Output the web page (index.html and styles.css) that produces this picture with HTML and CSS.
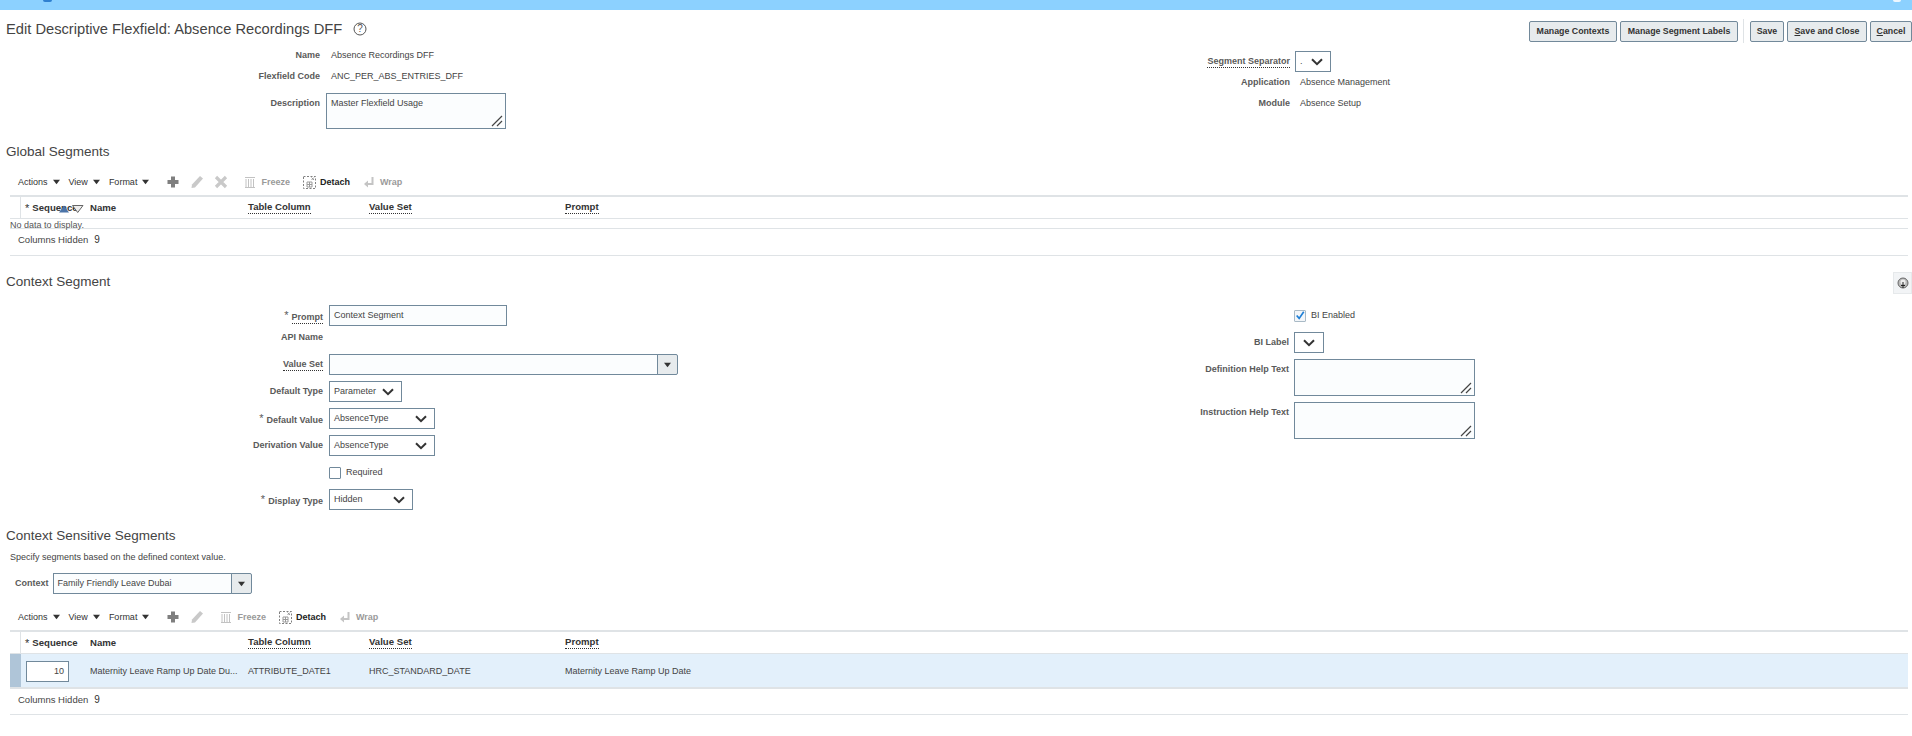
FILE: index.html
```html
<!DOCTYPE html>
<html lang="en">
<head>
<meta charset="utf-8">
<title>Edit Descriptive Flexfield</title>
<link rel="stylesheet" href="styles.css">
</head>
<body>
<svg class="defs" width="0" height="0" aria-hidden="true">
  <defs>
    <symbol id="chev" viewBox="0 0 12 8"><path d="M1 1.200 6 6.200 11 1.200" fill="none" stroke="#333" stroke-width="2"/></symbol>
    <symbol id="tri" viewBox="0 0 8 6"><path d="M0 .5H8L4 5.500Z" fill="#333"/></symbol>
    <symbol id="plus" viewBox="0 0 14 14"><path d="M5 1.500H9V5H12.500V9H9V12.500H5V9H1.500V5H5Z" fill="#7f7f7f"/></symbol>
    <symbol id="pencil" viewBox="0 0 14 14"><path d="M10 1 13 3.500 5 12.500 1.500 13 2 9.500Z" fill="#c9c9c9"/></symbol>
    <symbol id="cross" viewBox="0 0 14 14"><path d="M2 2 12 12M12 2 2 12" stroke="#c9c9c9" stroke-width="3.200"/></symbol>
    <symbol id="freeze" viewBox="0 0 12 12"><path d="M1 1.500H11M1 11.500H11M2 3V11M4.500 3V11M7 3V11M9.500 3V11" stroke="#c2c2c2" fill="none"/></symbol>
    <symbol id="detach" viewBox="0 0 13 13"><path d="M.5 .5H12.500V12.500H.5Z" fill="none" stroke="#808080" stroke-dasharray="2 1.500"/><path d="M4 6H9V11H4ZM6.500 6V11M4 8.500H9" fill="none" stroke="#9a9a9a"/><path d="M8.500 1.500 11 4M11 1.500 8.500 4" stroke="#999"/></symbol>
    <symbol id="wrap" viewBox="0 0 12 12"><path d="M9.500 1V8H3.500" fill="none" stroke="#c4c4c4" stroke-width="2"/><path d="M5 4.500 1 8 5 11.500Z" fill="#c4c4c4"/></symbol>
    <symbol id="grip" viewBox="0 0 12 12"><path d="M11 1 1 11M11 6 6 11" stroke="#444" stroke-width="1.200" fill="none"/></symbol>
  </defs>
</svg>

<div class="topbar"><span class="blob blob-blue"></span><span class="blob blob-white"></span></div>

<header class="head">
  <h1 class="title">Edit Descriptive Flexfield: Absence Recordings DFF
    <svg class="help" viewBox="0 0 14 14" width="14" height="14"><circle cx="7" cy="7" r="6" fill="none" stroke="#555"/><text x="7" y="10.200" text-anchor="middle" class="help-q">?</text></svg>
  </h1>
  <div class="actions">
    <button class="btn btn-mc">Manage Contexts</button>
    <button class="btn btn-msl">Manage Segment Labels</button>
    <span class="btn-sep"></span>
    <button class="btn btn-save">Save</button>
    <button class="btn btn-close"><u>S</u>ave and Close</button>
    <button class="btn btn-cancel"><u>C</u>ancel</button>
  </div>
</header>

<section class="meta">
  <div class="meta-left">
    <div class="row"><span class="lbl">Name</span><span class="val">Absence Recordings DFF</span></div>
    <div class="row"><span class="lbl">Flexfield Code</span><span class="val">ANC_PER_ABS_ENTRIES_DFF</span></div>
    <div class="row row-top row-desc"><span class="lbl">Description</span>
      <div class="area area-desc">Master Flexfield Usage<svg class="grip"><use href="#grip"/></svg></div>
    </div>
  </div>
  <div class="meta-right">
    <div class="row"><span class="lbl lbl-r"><span class="dot">Segment Separator</span></span>
      <div class="select sel-sep"><span>.</span><svg class="chev"><use href="#chev"/></svg></div></div>
    <div class="row"><span class="lbl lbl-r">Application</span><span class="val val-r">Absence Management</span></div>
    <div class="row"><span class="lbl lbl-r">Module</span><span class="val val-r">Absence Setup</span></div>
  </div>
</section>

<h2 class="heading">Global Segments</h2>

<div class="toolbar tb-first">
  <span class="menu">Actions<svg class="tri"><use href="#tri"/></svg></span>
  <span class="menu">View<svg class="tri"><use href="#tri"/></svg></span>
  <span class="menu">Format<svg class="tri"><use href="#tri"/></svg></span>
  <svg class="ico ico-first"><use href="#plus"/></svg>
  <svg class="ico"><use href="#pencil"/></svg>
  <svg class="ico"><use href="#cross"/></svg>
  <span class="tool off tool-first"><svg class="ico12"><use href="#freeze"/></svg>Freeze</span>
  <span class="tool"><svg class="ico13"><use href="#detach"/></svg>Detach</span>
  <span class="tool off"><svg class="ico12"><use href="#wrap"/></svg>Wrap</span>
</div>
<div class="table">
  <div class="t-head">
    <div class="gutter"></div>
    <div class="th th-seq"><span class="req">*</span>Sequence
      <svg class="sort" viewBox="0 0 26 8" width="26" height="8"><path d="M1 7.500 6 .5 11 7.500Z" fill="#4c74a8"/><path d="M14.500 .5H25L19.700 7.500Z" fill="#eee" stroke="#666"/></svg>
    </div>
    <div class="th">Name</div>
    <div class="th"><span class="dot">Table Column</span></div>
    <div class="th"><span class="dot">Value Set</span></div>
    <div class="th"><span class="dot">Prompt</span></div>
  </div>
  <div class="nodata">No data to display.</div>
  <div class="t-foot">Columns Hidden <span class="count">9</span></div>
</div>

<div class="head-row">
  <h2 class="heading">Context Segment</h2>
  <div class="icon-btn"><svg viewBox="0 0 12 12" width="12" height="12"><circle cx="6" cy="6" r="5" fill="#bbb" stroke="#666"/><circle cx="6" cy="5" r="2.500" fill="#eee"/><path d="M6 5V11M4 8.500H8" stroke="#222"/></svg></div>
</div>

<section class="ctx">
  <div class="ctx-left">
    <div class="row row-tight"><span class="lbl lbl-c"><span class="req">*</span><span class="dot">Prompt</span></span><div class="input w-prompt">Context Segment</div></div>
    <div class="row"><span class="lbl lbl-c">API Name</span></div>
    <div class="row"><span class="lbl lbl-c"><span class="dot">Value Set</span></span>
      <div class="combo w-vs"><div class="input"></div><span class="drop"><svg class="tri"><use href="#tri"/></svg></span></div></div>
    <div class="row"><span class="lbl lbl-c">Default Type</span><div class="select w-type"><span>Parameter</span><svg class="chev"><use href="#chev"/></svg></div></div>
    <div class="row"><span class="lbl lbl-c"><span class="req">*</span>Default Value</span><div class="select w-val"><span>AbsenceType</span><svg class="chev"><use href="#chev"/></svg></div></div>
    <div class="row"><span class="lbl lbl-c">Derivation Value</span><div class="select w-val"><span>AbsenceType</span><svg class="chev"><use href="#chev"/></svg></div></div>
    <div class="row"><span class="lbl lbl-c"></span><span class="check"></span><span class="check-text">Required</span></div>
    <div class="row"><span class="lbl lbl-c"><span class="req">*</span>Display Type</span><div class="select w-disp"><span>Hidden</span><svg class="chev"><use href="#chev"/></svg></div></div>
  </div>
  <div class="ctx-right">
    <div class="row row-bi"><span class="lbl lbl-b"></span><span class="check check-on"><svg viewBox="0 0 12 12" width="11" height="11"><path d="M2 6 5 9.500 10.500 1.500" fill="none" stroke="#1e7fd6" stroke-width="2"/></svg></span><span class="check-text">BI Enabled</span></div>
    <div class="row"><span class="lbl lbl-b">BI Label</span><div class="select sel-bi"><svg class="chev"><use href="#chev"/></svg></div></div>
    <div class="row row-top"><span class="lbl lbl-b">Definition Help Text</span><div class="area area-help"><svg class="grip"><use href="#grip"/></svg></div></div>
    <div class="row row-top"><span class="lbl lbl-b">Instruction Help Text</span><div class="area area-help"><svg class="grip"><use href="#grip"/></svg></div></div>
  </div>
</section>

<h2 class="heading h-css">Context Sensitive Segments</h2>
<p class="hint">Specify segments based on the defined context value.</p>
<div class="context-row">
  <span class="context-lbl">Context</span>
  <div class="combo w-ctx"><div class="input">Family Friendly Leave Dubai</div><span class="drop"><svg class="tri"><use href="#tri"/></svg></span></div>
</div>

<div class="toolbar tb-second">
  <span class="menu">Actions<svg class="tri"><use href="#tri"/></svg></span>
  <span class="menu">View<svg class="tri"><use href="#tri"/></svg></span>
  <span class="menu">Format<svg class="tri"><use href="#tri"/></svg></span>
  <svg class="ico ico-first"><use href="#plus"/></svg>
  <svg class="ico"><use href="#pencil"/></svg>
  <span class="tool off tool-first"><svg class="ico12"><use href="#freeze"/></svg>Freeze</span>
  <span class="tool"><svg class="ico13"><use href="#detach"/></svg>Detach</span>
  <span class="tool off"><svg class="ico12"><use href="#wrap"/></svg>Wrap</span>
</div>
<div class="table">
  <div class="t-head">
    <div class="gutter"></div>
    <div class="th th-seq"><span class="req">*</span>Sequence</div>
    <div class="th">Name</div>
    <div class="th"><span class="dot">Table Column</span></div>
    <div class="th"><span class="dot">Value Set</span></div>
    <div class="th"><span class="dot">Prompt</span></div>
  </div>
  <div class="t-row">
    <div class="row-mark"></div>
    <div class="td td-seq"><div class="input num">10</div></div>
    <div class="td">Maternity Leave Ramp Up Date Du...</div>
    <div class="td">ATTRIBUTE_DATE1</div>
    <div class="td">HRC_STANDARD_DATE</div>
    <div class="td">Maternity Leave Ramp Up Date</div>
  </div>
  <div class="t-foot t-foot-2">Columns Hidden <span class="count">9</span></div>
</div>
</body>
</html>
```
FILE: styles.css
```css
* { box-sizing: border-box; }
html, body { margin: 0; padding: 0; }
body {
  width: 1912px;
  height: 736px;
  overflow: hidden;
  background: #fff;
  color: #3a3a3a;
  font: 9px/1 "Liberation Sans", Arial, sans-serif;
}
.defs { position: absolute; }

/* Top strip */
.topbar { position: relative; height: 10px; background: #8cd1ff; }
.blob { position: absolute; top: 0; height: 2px; border-radius: 0 0 4px 4px; }
.blob-blue { left: 43px; width: 9px; background: #2f80d0; }
.blob-white { left: 1893px; width: 8px; background: #eef7ff; }

/* Page header */
.head { display: flex; justify-content: space-between; align-items: flex-start; height: 35px; padding: 9px 0 0 6px; }
.title { display: flex; align-items: center; gap: 11px; margin: 0; height: 20px; font-size: 14.700px; font-weight: 400; color: #444; }
.help-q { font: 10px "Liberation Sans", Arial, sans-serif; fill: #555; }
.actions { display: flex; align-items: center; gap: 3px; }
.btn {
  height: 21px;
  padding: 0;
  font: 700 8.800px "Liberation Sans", Arial, sans-serif;
  color: #333;
  background: #e7ebed;
  border: 1px solid #72899a;
  border-radius: 2px;
}
.btn-mc { width: 88px; }
.btn-msl { width: 118px; }
.btn-save { width: 34px; }
.btn-close { width: 80px; }
.btn-cancel { width: 42px; }
.btn-sep { width: 1px; height: 24px; margin: 0 3px 0 2px; background: #dfe3e6; }

/* Form rows */
.row { display: flex; align-items: center; min-height: 21px; margin-bottom: 6px; }
.row-top { align-items: flex-start; }
.row-tight { margin-bottom: 1px; }
.lbl { flex: none; text-align: right; font-weight: 700; color: #5a5a5a; }
.val { color: #444; }
.dot { border-bottom: 1px dotted #333; padding-bottom: 1px; }
.req { margin-right: 3px; font-size: 11px; font-weight: 400; vertical-align: 1px; }

.meta { display: flex; height: 97px; }
.meta-left { width: 1180px; }
.meta-left .row { margin-bottom: 0; }
.meta-left .lbl { width: 320px; margin-right: 11px; }
.meta-left .row-desc { margin-top: 6px; }
.meta-left .row-desc .lbl { margin-right: 6px; padding-top: 6px; }
.meta-right { padding-top: 6px; }
.meta-right .row { margin-bottom: 0; }
.lbl-r { width: 110px; margin-right: 5px; }
.val-r { margin-left: 5px; }

.area { position: relative; padding: 5px 4px; background: #fbfdfe; border: 1px solid #71899b; color: #444; }
.area-desc { width: 180px; height: 36px; }
.area-help { width: 181px; height: 37px; }
.grip { position: absolute; right: 2px; bottom: 1px; width: 12px; height: 12px; }

.select { display: flex; align-items: center; justify-content: space-between; height: 21px; padding: 0 7px 0 4px; background: #fff; border: 1px solid #71899b; color: #444; }
.chev { flex: none; width: 12px; height: 8px; }
.sel-sep { width: 36px; }
.sel-bi { width: 30px; justify-content: center; padding: 0; }
.w-type { width: 73px; }
.w-val { width: 106px; }
.w-disp { width: 84px; }

.input { display: flex; align-items: center; height: 21px; padding: 0 4px; background: #fbfdfe; border: 1px solid #71899b; color: #444; }
.w-prompt { width: 178px; }
.combo { display: flex; height: 21px; }
.combo .input { flex: 1; }
.drop { display: flex; align-items: center; justify-content: center; flex: none; width: 21px; margin-left: -1px; background: #e7ebed; border: 1px solid #71899b; border-radius: 0 2px 2px 0; }
.tri { flex: none; width: 7px; height: 6px; }
.w-vs { width: 349px; }
.w-ctx { width: 199px; }

/* Headings */
.heading { margin: 0; height: 20px; line-height: 20px; font-size: 13.500px; font-weight: 400; color: #444; padding-left: 6px; }

/* Table toolbar */
.toolbar { display: flex; align-items: center; height: 24px; padding: 0 0 2px 18px; color: #333; }
.tb-first { margin-top: 9px; }
.tb-second { margin-top: 12px; }
.menu { display: inline-flex; align-items: center; gap: 5px; margin-right: 9px; }
.ico { flex: none; width: 14px; height: 14px; margin-right: 10px; }
.ico-first { margin-left: 8px; }
.ico12 { flex: none; width: 12px; height: 12px; margin-right: 5px; }
.ico13 { flex: none; width: 13px; height: 13px; margin-right: 4px; }
.tool { display: inline-flex; align-items: center; margin-right: 13px; font-weight: 700; color: #222; }
.tool.off { color: #9a9a9a; }
.tool-first { margin-left: 6px; }

/* Tables */
.table { margin-left: 10px; width: 1898px; }
.t-head, .t-row { display: grid; grid-template-columns: 11px 64px 158px 121px 196px 1fr; }
.t-head { height: 24px; border-top: 2px solid #dfe3e6; border-bottom: 1px solid #dfe3e6; }
.gutter { border-right: 1px solid #dfe3e6; }
.th { position: relative; display: flex; align-items: center; padding: 1px 0 0 5px; font-size: 9.600px; font-weight: 700; color: #333; white-space: nowrap; }
.th-seq { padding-left: 4px; }
.sort { position: absolute; left: 37px; top: 8px; }
.nodata { height: 10px; line-height: 12px; color: #555; border-bottom: 1px solid #dfe3e6; }
.t-foot { display: flex; gap: 6px; align-items: center; height: 27px; padding: 0 0 4px 8px; border-bottom: 1px solid #dfe3e6; font-size: 9.500px; color: #444; }
.t-foot-2 { height: 26px; padding-bottom: 3px; }
.count { font-size: 10px; color: #333; }
.t-row { height: 35px; padding-top: 1px; align-items: center; background: #e3f0fb; border-bottom: 2px solid #dfe3e6; }
.row-mark { align-self: stretch; margin-top: -1px; background: #afc5d8; }
.td { padding-left: 5px; color: #444; white-space: nowrap; }
.num { justify-content: flex-end; width: 43px; padding-right: 4px; background: #fff; }

/* Context segment */
.head-row { display: flex; justify-content: space-between; align-items: flex-start; height: 33px; margin-top: 16px; }
.icon-btn { display: flex; align-items: center; justify-content: center; width: 19px; height: 22px; background: #f2f4f6; border: 1px solid #e6e9eb; }
.ctx { display: flex; height: 205px; }
.ctx-left { width: 1080px; }
.lbl-c { width: 323px; margin-right: 6px; }
.lbl-b { width: 209px; margin-right: 5px; }
.row-bi { margin-bottom: 6px; }
.row-top .lbl-b { padding-top: 6px; }
.check { display: flex; align-items: center; justify-content: center; width: 12px; height: 12px; background: #fff; border: 1px solid #71899b; border-radius: 1px; }
.check-on { background: #f3f6f9; border-color: #a9bac6; }
.check-text { margin-left: 5px; color: #444; }

.h-css { margin-top: 16px; }
.hint { margin: 6px 0 10px 10px; height: 11px; line-height: 11px; color: #444; }
.context-row { display: flex; align-items: center; height: 21px; padding-left: 15px; }
.context-lbl { margin-right: 4px; font-weight: 700; color: #5a5a5a; }
```
